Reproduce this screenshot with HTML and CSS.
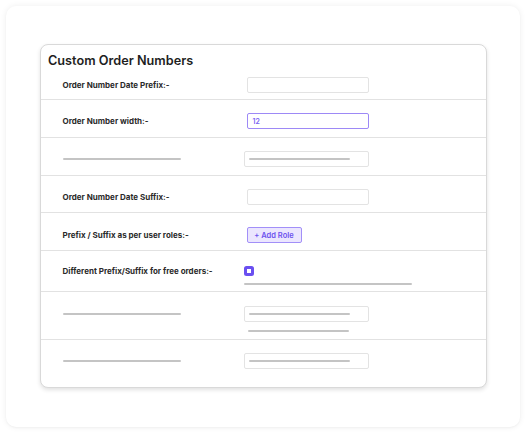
FILE: index.html
```html
<!DOCTYPE html>
<html>
<head>
<meta charset="utf-8">
<link rel="stylesheet" href="styles.css">
</head>
<body>
<div class="page">
  <div class="outer">
    <div class="card">
      <div class="title">Custom Order Numbers</div>

      <div class="row r1">
        <div class="label">Order Number Date Prefix:-</div>
        <div class="input shift"></div>
      </div>

      <div class="row r2">
        <div class="label">Order Number width:-</div>
        <div class="input shift focus">12</div>
      </div>

      <div class="row r2">
        <div class="label"><span class="bar lbar"></span></div>
        <div class="input"><span class="bar ibar"></span></div>
      </div>

      <div class="row r3">
        <div class="label">Order Number Date Suffix:-</div>
        <div class="input shift"></div>
      </div>

      <div class="row r4">
        <div class="label">Prefix / Suffix as per user roles:-</div>
        <button class="btn">+ Add Role</button>
      </div>

      <div class="row top r6">
        <div class="label">Different Prefix/Suffix for free orders:-</div>
        <div class="ctrl">
          <span class="check"></span>
          <span class="bar wbar"></span>
        </div>
      </div>

      <div class="row top r7">
        <div class="label lbox"><span class="bar lbar"></span></div>
        <div class="ctrl">
          <div class="input"><span class="bar ibar"></span></div>
          <span class="bar ibar below"></span>
        </div>
      </div>

      <div class="row top r8 last">
        <div class="label lbox"><span class="bar lbar"></span></div>
        <div class="input"><span class="bar ibar"></span></div>
      </div>
    </div>
  </div>
</div>
</body>
</html>
```

FILE: styles.css
```css
* { box-sizing: border-box; }
html, body { margin: 0; padding: 0; background: #ffffff; }
body { font-family: Inter, "Liberation Sans", sans-serif; color: #2b2b2b; }

.page { padding: 6px; width: 530px; height: 437px; }

.outer {
  width: 514px;
  height: 421px;
  border-radius: 10px;
  background: #ffffff;
  box-shadow: 0 0 6px rgba(0, 0, 0, 0.07), 0 1px 2px rgba(0, 0, 0, 0.03);
  padding: 38px 0 0 34px;
}

.card {
  width: 447px;
  border: 1px solid #d9d9d9;
  border-radius: 8px;
  background: #ffffff;
  box-shadow: 0 2px 4px rgba(0, 0, 0, 0.12);
}

.title {
  height: 25px;
  padding: 7px 0 0 7px;
  font-size: 12.7px;
  line-height: 18px;
  font-weight: 600;
  color: #1f1f1f;
}

.row {
  display: flex;
  align-items: center;
  padding-left: 21.5px;
  border-bottom: 1px solid #e2e2e2;
}
.row.top { align-items: flex-start; }
.row.last { border-bottom: none; }

.r1 { height: 30px; }
.r2 { height: 38px; padding-top: 5px; }
.r3 { height: 37px; padding-top: 6px; }
.r4 { height: 38px; padding-top: 7px; }
.r6 { height: 41px; padding-top: 15px; }
.r7 { height: 48px; padding-top: 13.7px; }
.r8 { height: 47px; padding-top: 13.3px; }

.label {
  flex: 0 0 181.5px;
  font-size: 8px;
  line-height: 10px;
  font-weight: 700;
  color: #2a2a2a;
  display: flex;
  align-items: center;
}
.label.lbox { height: 16px; }

.input {
  width: 125px;
  height: 16px;
  border: 1px solid #e3e3e3;
  border-radius: 2px;
  display: flex;
  align-items: center;
  padding-left: 3.7px;
}
.input.shift { margin-left: 2.5px; width: 122.5px; }
.input.focus {
  border: 1.5px solid #9d89f6;
  padding-left: 5px;
  font-size: 7px;
  font-weight: 600;
  color: #7a62f3;
}

.bar {
  display: block;
  height: 2px;
  border-radius: 1px;
  background: #c4c4c4;
}
.lbar { width: 118px; }
.ibar { width: 101px; }
.wbar { width: 168px; margin-top: 7px; }
.below { margin-top: 8.5px; margin-left: 3.7px; }

.btn {
  margin: 0 0 0 2.5px;
  width: 55px;
  height: 16.5px;
  padding: 0;
  border: 1px solid #a28ff8;
  border-radius: 2px;
  background: #ebe6fe;
  color: #6b52ee;
  font-family: Inter, "Liberation Sans", sans-serif;
  font-size: 7.5px;
  font-weight: 600;
}

.ctrl { display: flex; flex-direction: column; }

.check {
  display: block;
  width: 9.5px;
  height: 9.5px;
  border: 3px solid #6a4ff0;
  border-radius: 2.5px;
  background: #ffffff;
}
```
